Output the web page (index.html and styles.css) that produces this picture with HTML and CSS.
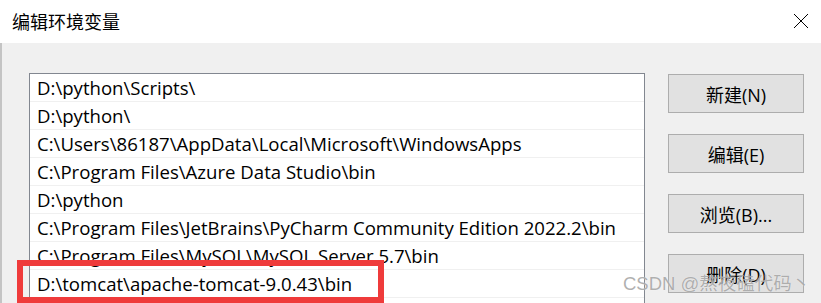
FILE: index.html
```html
<!DOCTYPE html>
<html lang="zh-CN">
<head>
<meta charset="utf-8">
<title>编辑环境变量</title>
<link rel="stylesheet" href="styles.css">
</head>
<body>
<div class="window">
  <div class="titlebar">
    <span class="title">编辑环境变量</span>
    <svg class="close" width="16" height="16" viewBox="0 0 16 16"><path d="M1 1 L15 15 M15 1 L1 15" stroke="#000" stroke-width="1" fill="none"/></svg>
  </div>
  <div class="content">
    <div class="listbox">
      <div class="row">D:\python\Scripts\</div>
      <div class="row">D:\python\</div>
      <div class="row">C:\Users\86187\AppData\Local\Microsoft\WindowsApps</div>
      <div class="row">C:\Program Files\Azure Data Studio\bin</div>
      <div class="row">D:\python</div>
      <div class="row">C:\Program Files\JetBrains\PyCharm Community Edition 2022.2\bin</div>
      <div class="row">C:\Program Files\MySQL\MySQL Server 5.7\bin</div>
      <div class="row">D:\tomcat\apache-tomcat-9.0.43\bin</div>
    </div>
    <div class="buttons">
      <div class="btn">新建(N)</div>
      <div class="btn">编辑(E)</div>
      <div class="btn">浏览(B)...</div>
      <div class="btn">删除(D)</div>
    </div>
  </div>
  <div class="highlight"></div>
  <div class="watermark">CSDN @熬夜磕代码丶</div>
</div>
</body>
</html>
```
FILE: styles.css
```css
* { box-sizing: border-box; }
html, body { margin: 0; padding: 0; }
body {
  width: 821px;
  height: 303px;
  overflow: hidden;
  background: #f0f0f0;
  font-family: "Open Sans", "Noto Sans", "Noto Sans CJK SC", sans-serif;
  color: #000;
}
.window {
  position: relative;
  width: 821px;
  height: 303px;
}
.titlebar {
  height: 43px;
  background: #fff;
  display: flex;
  align-items: center;
  justify-content: space-between;
  padding: 0 12px 1px 12px;
}
.title {
  font-family: "Noto Sans CJK SC", sans-serif;
  font-size: 18px;
  line-height: 1;
}
.close {
  display: block;
}
.content {
  display: flex;
  align-items: flex-start;
  height: 260px;
  padding: 30px 0 0 27px;
  border-left: 2px solid #c4c4c4;
}
.listbox {
  width: 616px;
  height: 240px;
  background: #fff;
  border: 1px solid #828790;
  border-bottom: none;
  overflow: hidden;
}
.row {
  height: 28px;
  line-height: 27px;
  padding-left: 7px;
  font-size: 18.6px;
  white-space: nowrap;
  border-bottom: 1px solid #f0f0f0;
}
.buttons {
  display: flex;
  flex-direction: column;
  gap: 21px;
  margin-left: 23px;
  margin-top: 1px;
}
.btn {
  width: 136px;
  height: 39px;
  background: #e1e1e1;
  border: 1px solid #adadad;
  display: flex;
  align-items: center;
  justify-content: center;
  font-size: 18px;
  font-family: "Open Sans", "Noto Sans CJK SC", sans-serif;
}
.highlight {
  position: absolute;
  left: 17px;
  top: 260px;
  width: 367px;
  height: 43px;
  border: 6px solid #ef3b3b;
}
.watermark {
  position: absolute;
  left: 623px;
  top: 269px;
  font-family: "Liberation Sans", "Noto Sans CJK SC", sans-serif;
  font-size: 18.5px;
  color: rgba(150, 150, 150, 0.75);
  text-shadow: 0 0 1px rgba(255,255,255,0.8);
  white-space: nowrap;
}
```
